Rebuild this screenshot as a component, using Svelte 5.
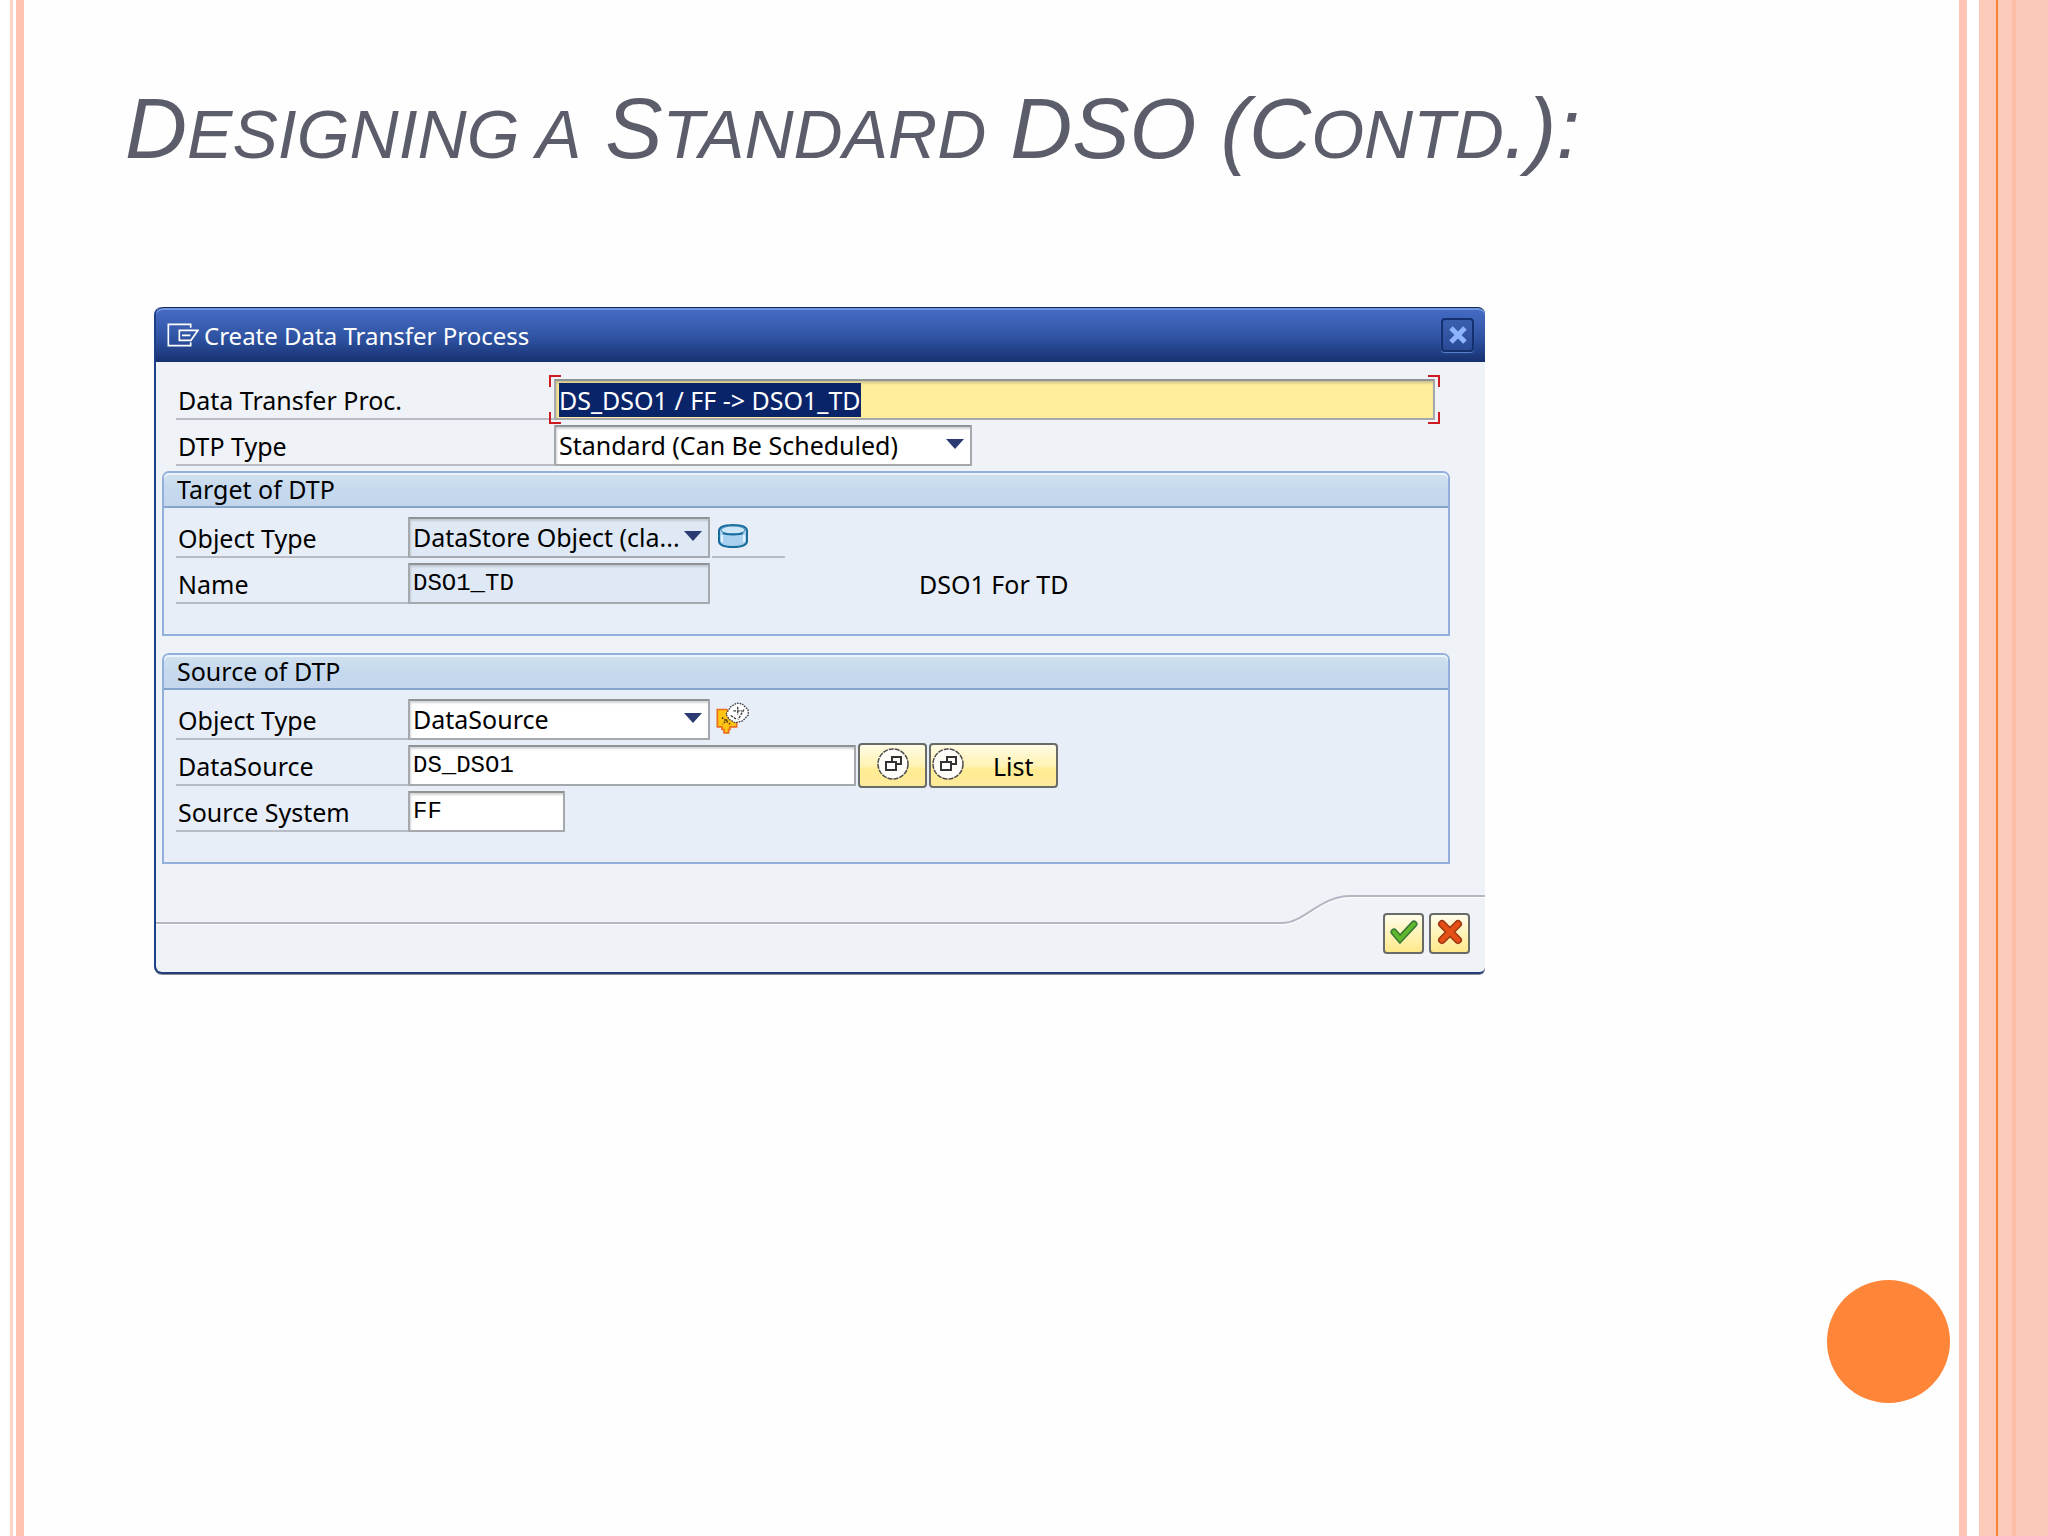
<script lang="ts">
	/**
	 * Slide: "Designing a Standard DSO (Contd.)"
	 *
	 * Shows the SAP "Create Data Transfer Process" dialog inside the
	 * orange striped presentation frame.
	 */

	import { onMount } from 'svelte';

	let processName = $state('DS_DSO1 / FF -> DSO1_TD');
	let dtpType = $state('Standard (Can Be Scheduled)');
	let targetType = $state('DataStore Object (cla...');
	let targetName = $state('DSO1_TD');
	let sourceType = $state('DataSource');
	let dataSource = $state('DS_DSO1');
	let sourceSystem = $state('FF');

	let processInput: HTMLInputElement;

	// The dialog opens with the suggested name selected
	onMount(() => {
		processInput.focus();
		processInput.select();
	});
</script>

{#snippet arrow()}
	<svg class="arrow" viewBox="0 0 18 10" aria-hidden="true">
		<path d="M0 0H18L9 10Z" fill="#2c3a74" />
	</svg>
{/snippet}

{#snippet windows()}
	<svg class="windows" viewBox="0 0 32 32" aria-hidden="true">
		<circle cx="16" cy="16" r="15" fill="#fffef8" stroke="#4d4d4d" stroke-width="1.5" stroke-dasharray="5 1" />
		<path d="M15 13V9H24V16H20" fill="none" stroke="#333" stroke-width="2" />
		<rect x="9" y="14" width="10" height="8" fill="#fff" stroke="#333" stroke-width="2" />
	</svg>
{/snippet}

<div class="slide">
	<div class="stripes left"></div>

	<main>
		<h1>D<span>esigning a</span> S<span>tandard</span> DSO (C<span>ontd</span>.):</h1>

		<section class="dialog" aria-labelledby="dialog-title">
			<header>
				<svg class="dialog-icon" viewBox="0 0 96 72" aria-hidden="true">
					<path d="M71 14V4H4V68H71V58M37 22H93L72 52H37ZM45 37H70" fill="none" stroke="#fff" stroke-width="5" />
				</svg>
				<h2 id="dialog-title">Create Data Transfer Process</h2>
				<button class="close" aria-label="Close">
					<svg viewBox="0 0 18 18" aria-hidden="true">
						<path d="M2 2L16 16M16 2L2 16" stroke="#8fb4ff" stroke-width="5" />
					</svg>
				</button>
			</header>

			<div class="body">
				<div class="rows general">
					<div class="row">
						<label for="process-name">Data Transfer Proc.</label>
						<div class="focused">
							<input id="process-name" class="field" bind:this={processInput} bind:value={processName} />
							<i class="corner tl"></i>
							<i class="corner tr"></i>
							<i class="corner bl"></i>
							<i class="corner br"></i>
						</div>
					</div>
					<div class="row">
						<label for="dtp-type">DTP Type</label>
						<div class="select wide">
							<select id="dtp-type" class="field" bind:value={dtpType}>
								<option>Standard (Can Be Scheduled)</option>
							</select>
							{@render arrow()}
						</div>
					</div>
				</div>

				<section class="group">
					<h3>Target of DTP</h3>
					<div class="rows">
						<div class="row">
							<label for="target-type">Object Type</label>
							<div class="select">
								<select id="target-type" class="field locked" bind:value={targetType}>
									<option>DataStore Object (cla...</option>
								</select>
								{@render arrow()}
							</div>
							<div class="icon-cell">
								<svg class="store" viewBox="0 0 30 24" aria-hidden="true">
									<path d="M1 7C1 3 7 1 15 1S29 3 29 7V17C29 21 23 23 15 23S1 21 1 17Z" fill="#a9d0ee" stroke="#176b9d" stroke-width="2" />
									<ellipse cx="15" cy="6" rx="12" ry="4" fill="#cfe8f8" stroke="#3b87b5" />
									<path d="M5 9C8 11 22 11 25 9" fill="none" stroke="#176b9d" stroke-width="2" />
									<path d="M4 11V18M26 11V18" stroke="#e3f3fd" stroke-width="2" />
								</svg>
							</div>
						</div>
						<div class="row">
							<label for="target-name">Name</label>
							<input id="target-name" class="field mono locked name" readonly value={targetName} />
							<output for="target-name">DSO1 For TD</output>
						</div>
					</div>
				</section>

				<section class="group">
					<h3>Source of DTP</h3>
					<div class="rows">
						<div class="row">
							<label for="source-type">Object Type</label>
							<div class="select">
								<select id="source-type" class="field" bind:value={sourceType}>
									<option>DataSource</option>
								</select>
								{@render arrow()}
							</div>
							<svg class="puzzle" viewBox="0 0 102 98" aria-hidden="true">
								<path d="M4 22H32L62 50V74H42V82H38V92H24V82H18V74H4Z" fill="#ffc414" stroke="#ea6f1c" stroke-width="5" />
								<path d="M18 46L42 66M40 46L20 66" stroke="#5a4108" stroke-width="5" stroke-dasharray="5 4" />
								<path d="M30 36L44 14L62 3L78 5L96 22L97 38L80 56L58 62L40 52Z" fill="#fff" />
								<path d="M30 36L44 14L62 3L78 5L96 22L97 38L80 56L58 62L40 52Z" fill="none" stroke="#3f3f3f" stroke-width="4" stroke-dasharray="5 3" />
								<path d="M52 26H78M65 14V38M44 40L60 50M84 22L66 52" fill="none" stroke="#3f3f3f" stroke-width="4" stroke-dasharray="8 3" />
							</svg>
						</div>
						<div class="row">
							<label for="data-source">DataSource</label>
							<input id="data-source" class="field mono source" bind:value={dataSource} />
							<button class="action" aria-label="Display DataSource">{@render windows()}</button>
							<button class="action list">{@render windows()}<span>List</span></button>
						</div>
						<div class="row">
							<label for="source-system">Source System</label>
							<input id="source-system" class="field mono system" bind:value={sourceSystem} />
						</div>
					</div>
				</section>
			</div>

			<footer>
				<div class="line"></div>
				<svg class="curve" viewBox="0 0 68 30" aria-hidden="true">
					<path d="M0 30C22 30 38 3 68 3" fill="none" stroke="#fff" />
					<path d="M0 28C22 28 38 1 68 1" fill="none" stroke="#b4b7c3" stroke-width="2" />
				</svg>
				<div class="buttons">
					<button class="tool" aria-label="Continue">
						<svg viewBox="0 0 28 26" aria-hidden="true">
							<path d="M4 13L10 20L24 5" fill="none" stroke="#38793a" stroke-width="7" stroke-linecap="round" />
							<path d="M4 13L10 20L24 5" fill="none" stroke="#62b82b" stroke-width="4" stroke-linecap="round" />
						</svg>
					</button>
					<button class="tool" aria-label="Cancel">
						<svg viewBox="0 0 28 26" aria-hidden="true">
							<path d="M6 5L22 21M22 5L6 21" fill="none" stroke="#9b3713" stroke-width="8" stroke-linecap="round" />
							<path d="M6 5L22 21M22 5L6 21" fill="none" stroke="#e34f14" stroke-width="5" stroke-linecap="round" />
						</svg>
					</button>
				</div>
			</footer>
		</section>

		<div class="dot"></div>
	</main>

	<div class="stripes right"></div>
</div>

<style>
	:global(body) {
		margin: 0;
	}

	.slide {
		display: flex;
		min-height: 100vh;
		background: #fdfefd;
		font-family: 'Noto Sans', sans-serif;
		font-size: 25px;
		color: #000;
	}

	.slide * {
		box-sizing: border-box;
	}

	.stripes {
		flex: none;
	}

	.stripes.left {
		width: 24px;
		background: linear-gradient(90deg, #fff 10px, #fdd3c7 10px 13px, #fff 13px 16px, #ffc1b0 16px);
	}

	.stripes.right {
		width: 89px;
		background: linear-gradient(
			90deg,
			#ffc4b4 8px,
			#fff 8px 20px,
			#fccab8 20px 37px,
			#f58236 37px 39px,
			#fccab8 39px 53px,
			#fdbca6 53px 57px,
			#fbc9b7 57px
		);
	}

	main {
		display: flex;
		flex: 1;
		flex-direction: column;
		padding: 76px 9px 133px 101px;
	}

	h1,
	h2,
	h3 {
		margin: 0;
		font-weight: 400;
	}

	h1 {
		font-family: 'Liberation Sans', sans-serif;
		font-size: 86px;
		font-style: italic;
		line-height: 104px;
		color: #5b5d6b;
	}

	h1 span {
		font-size: 68px;
		line-height: 68px;
		text-transform: uppercase;
	}

	h2 {
		font-size: 24px;
	}

	h3 {
		font-size: 25px;
	}

	.dialog {
		width: 65vw;
		margin: 127px 0 80px 29px;
		border-bottom: 2px solid #223f7c;
		border-left: 2px solid #1d3f8a;
		border-radius: 8px 8px 6px 8px;
		box-shadow: 0 1px #8a8d9c;
		background: #eff2f6;
	}

	header {
		display: flex;
		align-items: center;
		height: 55px;
		padding: 0 11px;
		border-top: 1px solid #12275c;
		border-radius: 7px 7px 0 0;
		box-shadow: inset 0 2px #6f95dc;
		background: linear-gradient(#466bc6, #3459a9 45%, #2c4f9e 60%, #17316f);
		color: #fff;
	}

	.dialog-icon {
		width: 32px;
		height: 24px;
		margin-right: 5px;
	}

	.close {
		display: flex;
		align-items: center;
		justify-content: center;
		width: 33px;
		height: 34px;
		margin-left: auto;
		padding: 0;
		border: 2px solid #14306e;
		border-radius: 4px;
		box-shadow: 0 1px 1px #5d83d3;
		background: linear-gradient(#3b5fb0, #2a4a94);
	}

	.close svg {
		width: 18px;
		height: 18px;
	}

	.body {
		padding: 17px 35px 31px 6px;
	}

	.rows {
		display: flex;
		flex-direction: column;
		gap: 5px;
	}

	.general {
		margin-bottom: 5px;
		padding: 0 15px 0 14px;
	}

	.row {
		display: flex;
		height: 41px;
	}

	label {
		flex: none;
		width: 232px;
		padding: 2px 2px 0;
		border-bottom: 2px solid #b9bcc4;
		line-height: 38px;
	}

	.general label {
		width: 378px;
	}

	.field {
		width: 100%;
		height: 41px;
		padding: 0 3px;
		border: 2px solid #a5a8ac;
		border-top-color: #909396;
		border-radius: 1px;
		outline: none;
		box-shadow: inset 1px 2px 2px #d3d5d8;
		background: #fff;
		color: #000;
		font-family: inherit;
		font-size: 25px;
	}

	.field.mono {
		font-family: 'Liberation Mono', monospace;
		font-size: 24px;
	}

	.field.locked {
		box-shadow: inset 1px 2px 2px #c3cad3;
		background: #dfe9f5;
	}

	select.field {
		appearance: none;
		padding-bottom: 2px;
	}

	.select {
		position: relative;
		width: 302px;
	}

	.select.wide {
		width: 418px;
	}

	.arrow {
		position: absolute;
		top: 14px;
		right: 8px;
		width: 18px;
		height: 10px;
		pointer-events: none;
	}

	.focused {
		position: relative;
		flex: 1;
	}

	.focused .field {
		box-shadow: inset 1px 2px 3px #c9bf8b;
		background: #ffef9c;
	}

	.focused .field::selection {
		background: #0a246a;
		color: #fff;
	}

	.corner {
		position: absolute;
		width: 12px;
		height: 12px;
		border: 0 solid #cc1c22;
	}

	.tl {
		top: -4px;
		left: -5px;
		border-width: 2px 0 0 2px;
	}

	.tr {
		top: -4px;
		right: -5px;
		border-width: 2px 2px 0 0;
	}

	.bl {
		bottom: -4px;
		left: -5px;
		border-width: 0 0 2px 2px;
	}

	.br {
		right: -5px;
		bottom: -4px;
		border-width: 0 2px 2px 0;
	}

	.group {
		border: 2px solid #93b0dc;
		border-radius: 7px 7px 0 0;
		background: #e7eef8;
	}

	.group + .group {
		margin-top: 17px;
	}

	.group h3 {
		height: 35px;
		padding: 0 13px;
		border-bottom: 2px solid #84a5cb;
		border-radius: 5px 5px 0 0;
		box-shadow: inset 0 2px #eaf4fb;
		background: linear-gradient(#d2e1ee, #c5d9ee 50%, #c5d6ec);
		line-height: 32px;
	}

	.group .rows {
		padding: 9px 12px 30px;
	}

	.icon-cell {
		width: 73px;
		margin-left: 2px;
		padding: 7px 6px;
		border-bottom: 2px solid #b9bcc4;
	}

	.store {
		display: block;
		width: 30px;
		height: 24px;
	}

	.puzzle {
		width: 34px;
		height: 33px;
		margin: 3px 6px;
	}

	.field.name {
		width: 302px;
	}

	.field.source {
		width: 448px;
	}

	.field.system {
		width: 157px;
	}

	output {
		margin-left: 209px;
		padding: 2px 0;
		line-height: 38px;
	}

	.action {
		display: flex;
		align-items: center;
		justify-content: center;
		width: 69px;
		height: 45px;
		margin: -2px 0 0 2px;
		padding: 0 0 3px;
		border: 2px solid #696b68;
		border-radius: 4px;
		background: linear-gradient(#fffbe4, #fff3b5 50%, #ffec92 60%, #fcea9c);
		font: inherit;
		color: #000;
	}

	.action.list {
		justify-content: flex-start;
		width: 129px;
		gap: 29px;
		padding-left: 1px;
	}

	.action span {
		padding-top: 3px;
	}

	.windows {
		flex: none;
		width: 32px;
		height: 32px;
	}

	footer {
		display: flex;
		height: 77px;
	}

	.line {
		flex: 1;
		margin-top: 27px;
		border-top: 2px solid #b4b7c3;
		box-shadow: inset 0 1px #fff;
	}

	.curve {
		width: 68px;
		height: 30px;
	}

	.buttons {
		display: flex;
		justify-content: flex-end;
		gap: 5px;
		width: 135px;
		padding: 16px 15px 0 0;
		border-top: 2px solid #b4b7c3;
		box-shadow: inset 0 1px #fff;
	}

	.tool {
		display: flex;
		align-items: center;
		justify-content: center;
		width: 41px;
		height: 41px;
		padding: 0 0 3px;
		border: 2px solid #696b68;
		border-radius: 4px;
		background: linear-gradient(#fffdea, #fff3b8 50%, #ffe98c);
	}

	.tool svg {
		width: 28px;
		height: 26px;
	}

	.dot {
		width: 123px;
		height: 123px;
		margin-top: auto;
		margin-left: auto;
		border-radius: 50%;
		background: #ff8538;
	}
</style>
